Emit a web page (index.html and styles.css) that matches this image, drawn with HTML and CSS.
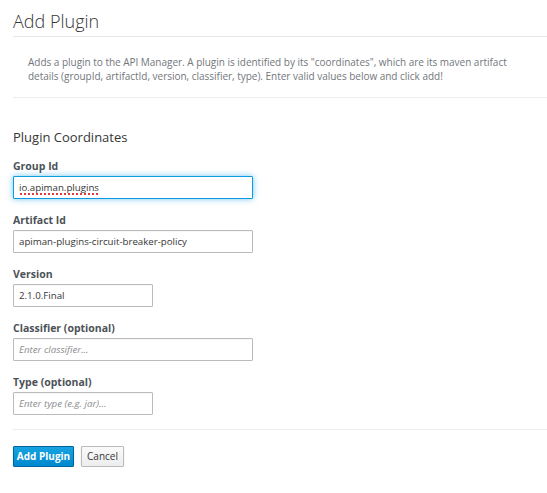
FILE: index.html
```html
<!DOCTYPE html>
<html lang="en">
<head>
<meta charset="utf-8">
<title>Add Plugin</title>
<link rel="stylesheet" href="styles.css">
</head>
<body>
<div class="page">
  <h1 class="title">Add Plugin</h1>
  <p class="description">Adds a plugin to the API Manager. A plugin is identified by its "coordinates", which are its maven artifact details (groupId, artifactId, version, classifier, type). Enter valid values below and click add!</p>
  <form class="form">
    <h2 class="section-title">Plugin Coordinates</h2>
    <div class="field">
      <label class="label" for="groupId">Group Id</label>
      <span class="spell">
        <input class="input input-wide input-focus" id="groupId" type="text" value="io.apiman.plugins">
      </span>
    </div>
    <div class="field">
      <label class="label" for="artifactId">Artifact Id</label>
      <input class="input input-wide" id="artifactId" type="text" value="apiman-plugins-circuit-breaker-policy">
    </div>
    <div class="field">
      <label class="label" for="version">Version</label>
      <input class="input input-narrow" id="version" type="text" value="2.1.0.Final">
    </div>
    <div class="field">
      <label class="label" for="classifier">Classifier (optional)</label>
      <input class="input input-wide" id="classifier" type="text" placeholder="Enter classifier...">
    </div>
    <div class="field">
      <label class="label" for="type">Type (optional)</label>
      <input class="input input-narrow" id="type" type="text" placeholder="Enter type (e.g. jar)...">
    </div>
    <div class="actions">
      <button type="button" class="btn btn-primary">Add Plugin</button>
      <button type="button" class="btn btn-default">Cancel</button>
    </div>
  </form>
</div>
</body>
</html>
```

FILE: styles.css
```css
html, body {
  margin: 0;
  padding: 0;
  background: #ffffff;
}

body {
  font-family: "Open Sans", "Noto Sans", sans-serif;
  color: #363636;
}

.page {
  padding-left: 13px;
}

.title {
  margin: 9px 0 0 0;
  font-size: 18px;
  font-weight: 300;
  line-height: 24px;
  color: #363636;
  padding-bottom: 3px;
  border-bottom: 1px solid #e6e6e6;
}

.description {
  margin: 0;
  padding: 19px 32px 14px 15px;
  font-size: 10px;
  letter-spacing: -0.02px;
  line-height: 13.5px;
  color: #72767b;
  border-bottom: 1px solid #ededed;
}

.form {
  margin: 0;
}

.section-title {
  margin: 30px 0 0 0;
  font-size: 13px;
  font-weight: 400;
  line-height: 18px;
  color: #363636;
}

.field {
  display: flex;
  flex-direction: column;
  align-items: flex-start;
  margin-bottom: 14px;
}

.section-title + .field {
  margin-top: 13px;
}

.label {
  font-size: 10.5px;
  font-weight: 700;
  line-height: 15px;
  color: #4d5258;
  margin-bottom: 2px;
}

.spell {
  position: relative;
  display: block;
}

.spell::after {
  content: "";
  position: absolute;
  left: 6px;
  top: 17px;
  width: 80px;
  height: 2px;
  background-image:
    linear-gradient(45deg, transparent 35%, #e0383e 35%, #e0383e 65%, transparent 65%),
    linear-gradient(-45deg, transparent 35%, #e0383e 35%, #e0383e 65%, transparent 65%);
  background-size: 4px 2px;
  background-repeat: repeat-x;
  pointer-events: none;
}

.input {
  display: block;
  box-sizing: border-box;
  height: 23px;
  margin: 0;
  padding: 0 5px;
  border: 1px solid #bbbbbb;
  border-radius: 1px;
  font-family: "Open Sans", "Noto Sans", sans-serif;
  font-size: 9.7px;
  color: #363636;
  background: #ffffff;
  outline: none;
  box-shadow: inset 0 1px 1px rgba(3, 3, 3, 0.03);
}

.input::placeholder {
  color: #8b8d8f;
  font-style: italic;
}

.input-wide {
  width: 240px;
}

.input-narrow {
  width: 140px;
}

.input-focus {
  border-color: #0a9be0;
  box-shadow: 0 0 6px rgba(0, 150, 225, 0.55);
}

.actions {
  display: flex;
  gap: 7px;
  margin-top: 3px;
  padding-top: 16px;
  border-top: 1px solid #ededed;
}

.btn {
  box-sizing: border-box;
  height: 21px;
  margin: 0;
  padding: 0;
  font-family: "Open Sans", "Noto Sans", sans-serif;
  font-size: 10px;
  line-height: 19px;
  white-space: nowrap;
  border-radius: 1px;
  cursor: pointer;
}

.btn-primary {
  width: 61px;
  font-weight: 700;
  color: #ffffff;
  background: linear-gradient(to bottom, #17a3e0 0%, #0088ce 100%);
  border: 1px solid #00659c;
  box-shadow: 0 1px 2px rgba(3, 3, 3, 0.15);
}

.btn-default {
  width: 43px;
  font-weight: 400;
  color: #363636;
  background: linear-gradient(to bottom, #fafafa 0%, #ededed 100%);
  border: 1px solid #bbbbbb;
  box-shadow: 0 1px 2px rgba(3, 3, 3, 0.12);
}
```
